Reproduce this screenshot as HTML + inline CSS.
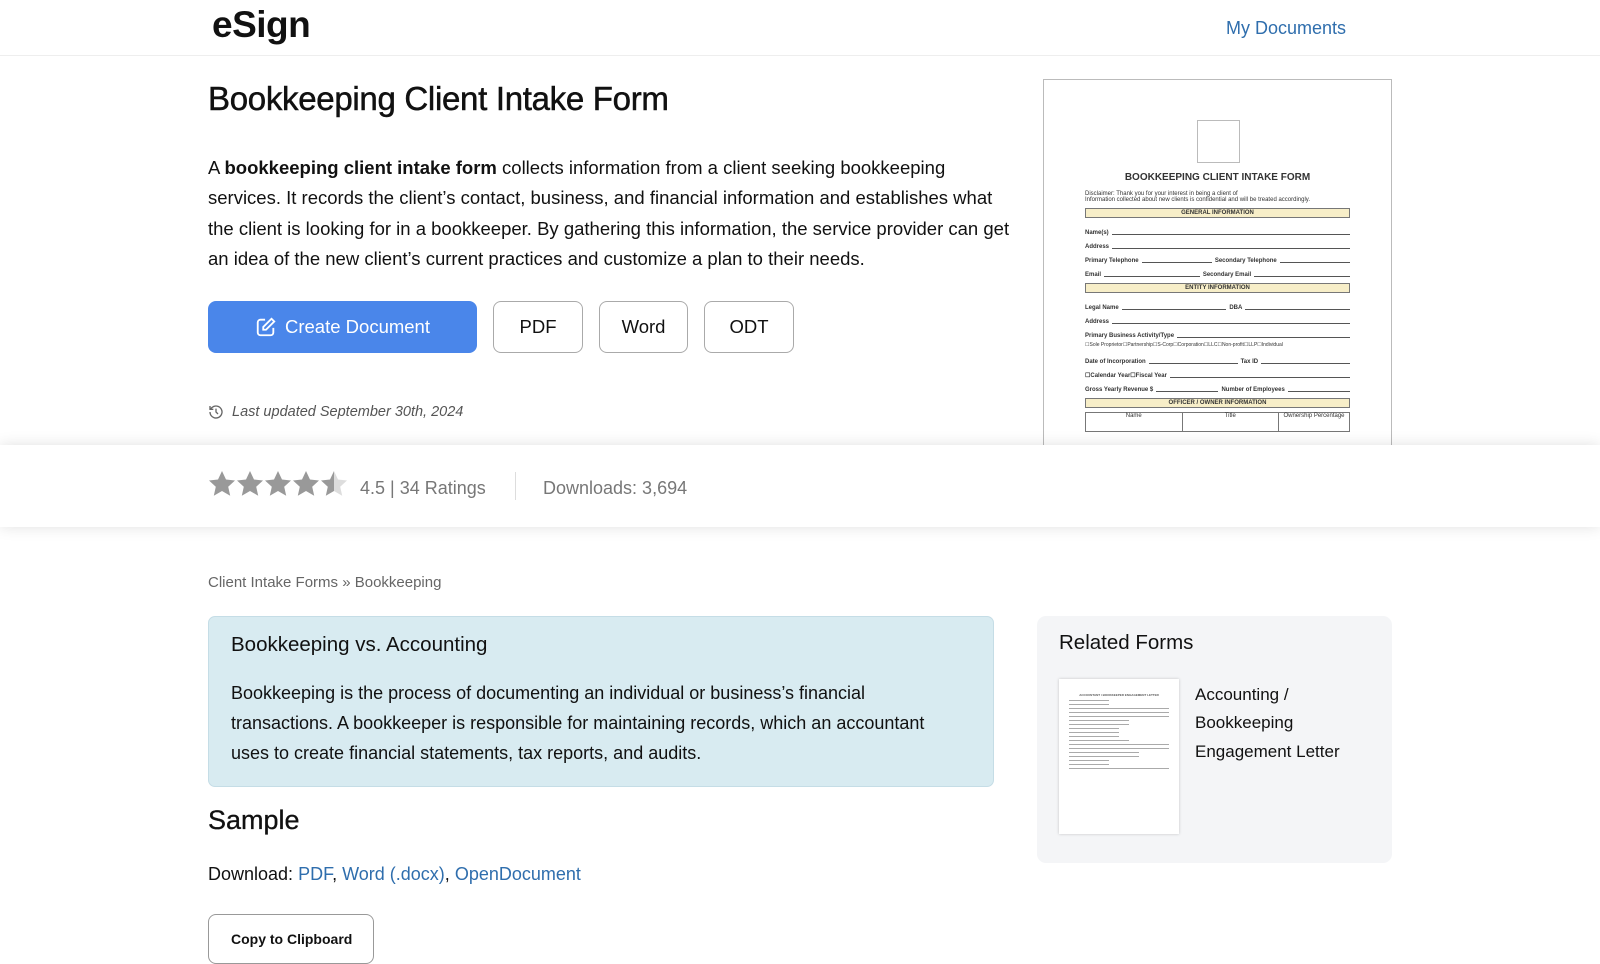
<!DOCTYPE html>
<html><head><meta charset="utf-8"><style>
*{box-sizing:border-box;margin:0;padding:0}
body{width:1600px;height:954px;overflow:hidden;background:#fff;font-family:"Liberation Sans",Arial,sans-serif;color:#111;position:relative}
.hdr{position:absolute;left:0;top:0;width:1600px;height:56px;border-bottom:1px solid #eee}
.logo{position:absolute;left:212px;top:4px;font-size:37px;font-weight:bold;letter-spacing:-0.5px}
.mydoc{position:absolute;left:1226px;top:18px;font-size:18px;color:#2f6ead}
h1{position:absolute;left:208px;top:80px;font-size:33px;font-weight:normal;letter-spacing:-0.3px;-webkit-text-stroke:0.5px #111}
.intro{position:absolute;left:208px;top:153px;width:815px;font-size:18.5px;line-height:30.3px}
.btn{position:absolute;top:301px;height:52px;border:1px solid #aaa;border-radius:8px;font-size:18.5px;display:flex;align-items:center;justify-content:center;background:#fff}
.create{left:208px;width:269px;background:#4a86ea;border:none;color:#fff;gap:8px}
.upd{position:absolute;left:208px;top:404px;font-size:14.5px;font-style:italic;color:#555;display:flex;gap:8px;align-items:center}
.prev{position:absolute;left:1043px;top:79px;width:349px;height:380px;border:1px solid #bbb;background:#fff;overflow:hidden;font-size:6px;color:#333}
.band{position:absolute;left:0;top:445px;width:1600px;height:82px;background:#fff;box-shadow:0 0 14px rgba(0,0,0,.12)}
.stars{position:absolute;left:208px;top:470px;display:flex;gap:0}
.rt{position:absolute;left:360px;top:478px;font-size:18px;color:#777}
.sep{position:absolute;left:515px;top:472px;width:1px;height:28px;background:#ddd}
.dl{position:absolute;left:543px;top:478px;font-size:18px;color:#777}
.crumb{position:absolute;left:208px;top:574px;font-size:15px;color:#666}
.box{position:absolute;left:208px;top:616px;width:786px;height:171px;background:#d8ebf1;border:1px solid #c5dde6;border-radius:7px}
.box h3{position:absolute;left:22px;top:16px;font-size:20.5px;font-weight:normal}
.box p{position:absolute;left:22px;top:62px;width:722px;font-size:18px;line-height:29.8px}
.sample{position:absolute;left:208px;top:805px;font-size:27px;-webkit-text-stroke:0.3px #111}
.dlt{position:absolute;left:208px;top:864px;font-size:18px}
.dlt a{color:#2f6ead;text-decoration:none}
.copy{position:absolute;left:208px;top:914px;width:166px;height:50px;border:1px solid #999;border-radius:8px;font-size:14px;font-weight:bold;padding:16px 0 0 22px}
.rel{position:absolute;left:1037px;top:616px;width:355px;height:247px;background:#f4f5f7;border-radius:9px}
.rel h3{position:absolute;left:22px;top:15px;font-size:20.5px;font-weight:normal}
.thumb{position:absolute;left:22px;top:63px;width:120px;height:155px;background:#fff;box-shadow:0 0 3px rgba(0,0,0,.2);padding:14px 10px;font-size:3px;color:#555}
.thumb i{display:block;height:1px;background:#aaa;margin:3px 0}
.rel p{position:absolute;left:158px;top:65px;font-size:17px;line-height:28.3px}
.hl{background:#f7eec8;border:1px solid #777;height:10px;line-height:9px;text-align:center;font-weight:bold;font-size:6px;margin:5px 0 4px}
.r{display:flex;gap:3px;font-weight:bold;font-size:6px;height:14px;align-items:flex-end}
.r span{flex:1;border-bottom:1px solid #555;margin-bottom:1px}
</style></head><body>
<div class="hdr"><div class="logo">eSign</div><div class="mydoc">My Documents</div></div>
<h1>Bookkeeping Client Intake Form</h1>
<div class="intro">A <b>bookkeeping client intake form</b> collects information from a client seeking bookkeeping services. It records the client’s contact, business, and financial information and establishes what the client is looking for in a bookkeeper. By gathering this information, the service provider can get an idea of the new client’s current practices and customize a plan to their needs.</div>
<div class="btn create"><svg width="22" height="22" viewBox="0 0 24 24" fill="none" stroke="#fff" stroke-width="2"><path d="M11 4H6a3 3 0 0 0-3 3v11a3 3 0 0 0 3 3h11a3 3 0 0 0 3-3v-5"/><path d="M18 3l3 3-9 9H9v-3z"/></svg>Create Document</div>
<div class="btn" style="left:493px;width:90px">PDF</div>
<div class="btn" style="left:599px;width:89px">Word</div>
<div class="btn" style="left:704px;width:90px">ODT</div>
<div class="upd"><svg width="16" height="16" viewBox="0 0 24 24" fill="none" stroke="#666" stroke-width="2"><path d="M3 12a9 9 0 1 0 3-6.7L3 8"/><path d="M3 3v5h5M12 7v5l3 3"/></svg>Last updated September 30th, 2024</div>
<div class="prev">
<div style="position:absolute;left:153px;top:40px;width:43px;height:43px;border:1px solid #bbb"></div>
<div style="position:absolute;left:0;width:100%;top:92px;text-align:center;font-size:10px;font-weight:bold">BOOKKEEPING CLIENT INTAKE FORM</div>
<div style="position:absolute;left:41px;top:111px;width:265px">
<div>Disclaimer: Thank you for your interest in being a client of<br>Information collected about new clients is confidential and will be treated accordingly.</div>
<div class="hl">GENERAL INFORMATION</div>
<div class="r">Name(s)<span></span></div>
<div class="r">Address<span></span></div>
<div class="r">Primary Telephone<span></span>Secondary Telephone<span></span></div>
<div class="r">Email<span></span>Secondary Email<span></span></div>
<div class="hl">ENTITY INFORMATION</div>
<div class="r">Legal Name<span></span>DBA<span></span></div>
<div class="r">Address<span></span></div>
<div class="r">Primary Business Activity/Type<span></span></div>
<div style="font-size:5px;height:12px;line-height:12px">☐Sole Proprietor☐Partnership☐S-Corp☐Corporation☐LLC☐Non-profit☐LLP☐Individual</div>
<div class="r">Date of Incorporation<span></span>Tax ID<span></span></div>
<div class="r">☐Calendar Year☐Fiscal Year<span></span></div>
<div class="r">Gross Yearly Revenue $<span></span>Number of Employees<span></span></div>
<div class="hl">OFFICER / OWNER INFORMATION</div>
<div style="border:1px solid #777;height:20px;display:flex;text-align:center"><div style="flex:1;border-right:1px solid #777">Name</div><div style="flex:1;border-right:1px solid #777">Title</div><div style="width:70px">Ownership Percentage</div></div>
</div></div>
<div class="band"></div>
<div class="stars">
<svg width="145" height="28" viewBox="0 0 145 28"><defs><linearGradient id="h"><stop offset="50%" stop-color="#999"/><stop offset="50%" stop-color="#ddd"/></linearGradient><path id="s" d="M14 1l4 8.5 9 1-6.8 6.2 2 9L14 21l-8.2 4.7 2-9L1 10.5l9-1z"/></defs>
<use href="#s" fill="#999"/><use href="#s" x="28" fill="#999"/><use href="#s" x="56" fill="#999"/><use href="#s" x="84" fill="#999"/><use href="#s" x="112" fill="url(#h)"/></svg></div>
<div class="rt">4.5 | 34 Ratings</div><div class="sep"></div><div class="dl">Downloads: 3,694</div>
<div class="crumb">Client Intake Forms » Bookkeeping</div>
<div class="box"><h3>Bookkeeping vs. Accounting</h3><p>Bookkeeping is the process of documenting an individual or business’s financial transactions. A bookkeeper is responsible for maintaining records, which an accountant uses to create financial statements, tax reports, and audits.</p></div>
<div class="sample">Sample</div>
<div class="dlt">Download: <a>PDF</a>, <a>Word (.docx)</a>, <a>OpenDocument</a></div>
<div class="copy">Copy to Clipboard</div>
<div class="rel"><h3>Related Forms</h3><div class="thumb"><div style="text-align:center;font-weight:bold">ACCOUNTANT / BOOKKEEPER ENGAGEMENT LETTER</div><i style="width:40%"></i><i style="width:40%"></i><i></i><i></i><i></i><i style="width:60%"></i><i style="width:60%"></i><i style="width:50%"></i><i style="width:50%"></i><i style="width:50%"></i><i style="width:60%"></i><i></i><i></i><i style="width:70%"></i><i style="width:70%"></i><i style="width:40%"></i><i style="width:40%"></i><i></i></div><p>Accounting /<br>Bookkeeping<br>Engagement Letter</p></div>
</body></html>
